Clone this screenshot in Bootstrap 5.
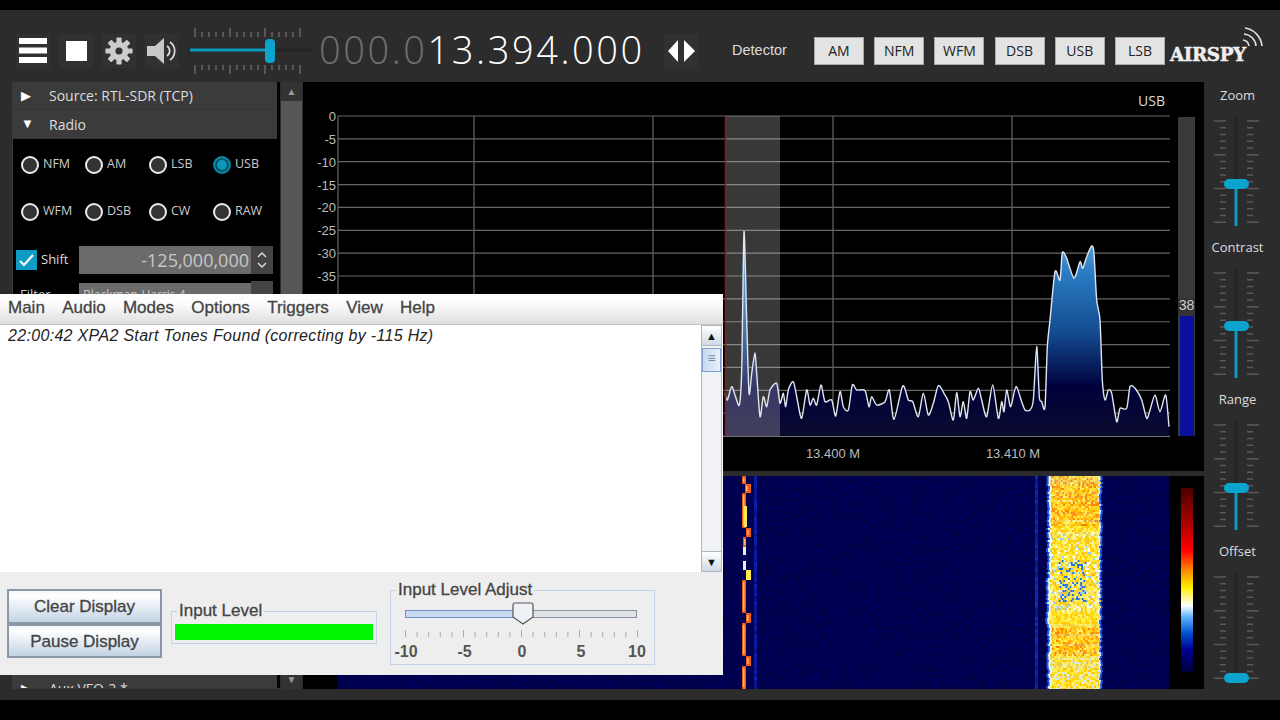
<!DOCTYPE html>
<html lang="en">
<head>
    <meta charset="UTF-8">
    <title>SDR# + PC-ALE</title>
    <link href="https://cdn.jsdelivr.net/npm/bootstrap@5.3.0/dist/css/bootstrap.min.css" rel="stylesheet">
    <style>
        html, body { height: 100%; background: #000; overflow: hidden; }
        body { font-family: "Open Sans", "Liberation Sans", sans-serif; color: #ddd; }
        .sdr-app { height: 690px; margin-top: 10px; background: #2c2c2c; }

        /* top bar */
        .sdr-top { height: 72px; padding: 9px 0 0 16px; }
        .sdr-tile { width: 34px; height: 34px; background: #313131; margin-right: 9px; }
        .sdr-hslider { margin: 3px 0 0 1px; width: 122px; }
        .sdr-freq { font-size: 38px; font-weight: 300; letter-spacing: 2.55px; color: #fff; line-height: 1; margin: -4px 0 0 8px; width: 345px; white-space: nowrap; }
        .sdr-freq span { color: #707070; }
        .sdr-arrows { width: 34px; height: 34px; background: #313131; }
        .sdr-detector { font-family: "Liberation Sans", sans-serif; font-size: 14.5px; color: #ddd; width: 82px; margin-left: 34px; }
        .sdr-mode { width: 50px; height: 28px; margin-right: 10.2px; padding: 0; border: 1px solid #a8a8a8; border-radius: 0; background: #e3e3e3; color: #222; font-size: 14px; line-height: 1; font-family: "Open Sans", sans-serif; }
        .sdr-logo { position: relative; width: 96px; height: 40px; margin-left: -6px; }
        .sdr-logo b { position: absolute; left: 1px; top: 15px; font-family: "DejaVu Serif", serif; font-weight: 700; font-size: 18px; letter-spacing: -.4px; line-height: 1; color: #eee; -webkit-text-stroke: .5px #eee; transform: scaleX(1.02); transform-origin: left; }
        .sdr-logo svg { position: absolute; left: 70px; top: -4px; }

        /* left panel */
        .sdr-main { height: 607px; }
        .sdr-left { width: 268px; margin-left: 12px; background: #000; font-size: 13px; overflow: hidden; border-left: 1px solid #3a3a3a; border-bottom: 1px solid #3a3a3a; }
        .sdr-head { flex: 0 0 28px; background: #3b3b3b; color: #ddd; font-size: 14px; border-bottom: 1px solid #333; padding-left: 8px; margin-right: 3px; }
        .sdr-head i { font-style: normal; width: 28px; font-size: 13px; color: #fff; }
        .sdr-head + .sdr-head { flex-basis: 29px; }
        .sdr-head.sdr-last { margin-bottom: -15px; }
        .sdr-radios { display: grid; grid-template-columns: repeat(4, 64px); grid-auto-rows: 47px; padding: 2px 0 0 8px; }
        .sdr-radio.form-check-input { width: 18px; height: 18px; margin: 0; background-color: #333; border: 2.5px solid #ececec; flex: none; }
        .sdr-radio.form-check-input:checked { background-image: none; background-color: #0c97bd; border-color: #0a86aa; box-shadow: inset 0 0 0 2px #055; }
        .sdr-radios label { color: #ccc; margin-left: 0; font-size: 12.5px; }
        .sdr-shift { height: 28px; margin-top: 11px; padding-left: 3px; }
        .sdr-check { width: 21px; height: 20px; background: #0f9cc4; flex: none; }
        .sdr-num { width: 172px; height: 28px; background: #6b6b6b; color: #c8c8c8; font-size: 18px; text-align: right; padding-right: 2px; line-height: 28px; }
        .sdr-spin { width: 22px; height: 28px; background: #444; }
        .sdr-filter { height: 24px; margin-top: 9px; padding-left: 7px; color: #ccc; }
        .sdr-filter .sdr-num { font-size: 12px; text-align: left; padding-left: 4px; line-height: 24px; height: 24px; }
        .sdr-scroll { width: 21px; margin-left: 1px; margin-right: 1px; background: #565656; }
        .sdr-scroll div { height: 19px; background: #333; color: #999; font-size: 10px; text-align: center; line-height: 19px; }

        /* centre */
        .sdr-centre { width: 901px; }
        .sdr-centre svg { display: block; }
        .sdr-spec { height: 389px; background: #000; }
        .sdr-spec text { font-family: "Liberation Sans", sans-serif; font-size: 13px; fill: #bbb; }
        .sdr-wf { height: 213px; margin-top: 5px; background: #000; overflow: hidden; }
        .sdr-wf canvas { display: block; filter: blur(.6px); }

        /* right sliders */
        .sdr-right { width: 76px; padding-top: 3px; }
        .sdr-right .sdr-label { height: 20px; line-height: 20px; text-align: center; font-size: 13px; color: #ddd; margin-left: -9px; }
        .sdr-right .sdr-group { height: 152px; }
        .sdr-right svg { display: block; margin-top: 11px; }

        /* java window on top */
        .jv-win { position: absolute; left: 0; top: 294px; width: 723px; height: 381px; background: #eee; color: #444; font-family: "Liberation Sans", sans-serif; }
        .jv-menu { height: 31px; padding: 0 0 2px 8px; background: linear-gradient(#fff, #fbfbfb 35%, #dedede); border-bottom: 1px solid #c4c4c4; gap: 17.3px; font-size: 17px; -webkit-text-stroke: .3px #444; }
        .jv-log { height: 247px; background: #fff; }
        .jv-text { padding: 0 8px; font-style: italic; font-size: 16px; color: #222; letter-spacing: .32px; margin-top: -1px; }
        .jv-sb { width: 21px; margin-right: 1px; background: #f0f2f5; border: 1px solid #aeb6bf; }
        .jv-sb div { height: 20px; background: linear-gradient(#fff, #cfd9e6); text-align: center; font-size: 11px; line-height: 20px; color: #111; border-bottom: 1px solid #aeb6bf; }
        .jv-sb .jv-thumb { height: 24px; margin-top: 2px; background: linear-gradient(90deg, #c6d9f0, #e8f0fa); border: 1px solid #7f9fca; color: #6d8fb8; line-height: 19px; font-size: 14px; }
        .jv-sb div:last-child { margin-top: auto; border-bottom: 0; border-top: 1px solid #aeb6bf; }
        .jv-bottom { padding: 17px 0 0 7px; }
        .jv-btns { width: 155px; }
        .jv-btn { display: block; height: 35px; width: 155px; padding: 0; border: 2px solid #8a98a8; border-radius: 0; background: linear-gradient(#f3f7fb, #fff 15%, #c3d3e4); color: #444; font-size: 17px; line-height: 1; -webkit-text-stroke: .3px #444; }
        .jv-btn + .jv-btn { height: 34px; }
        .jv-field { position: relative; border: 1px solid #c5d4e5; }
        .jv-field > span { position: absolute; left: 5px; top: -11px; background: #eee; padding: 0 2px; font-size: 17px; line-height: 20px; color: #444; -webkit-text-stroke: .3px #444; }
        .jv-level { width: 206px; height: 33px; margin: 22px 0 0 9px; }
        .jv-bar { position: absolute; left: 3px; right: 3px; top: 12px; height: 16px; background: #00f500; }
        .jv-adjust { width: 265px; height: 75px; margin: 1px 0 0 13px; }
        .jv-adjust svg { display: block; }
        .jv-adjust text { font-family: "Liberation Sans", sans-serif; font-size: 16px; fill: #555; font-weight: 700; text-anchor: middle; }
    </style>
</head>
<body>
<div class="sdr-app">
    <!-- top bar -->
    <div class="sdr-top d-flex align-items-center">
        <div class="sdr-tile d-flex align-items-center justify-content-center">
            <svg width="28" height="25" viewBox="0 0 28 25" fill="#fff"><rect y="0" width="28" height="6"/><rect y="9.500" width="28" height="6"/><rect y="19" width="28" height="6"/></svg>
        </div>
        <div class="sdr-tile d-flex align-items-center justify-content-center">
            <svg width="21" height="20"><rect width="21" height="20" fill="#fff"/></svg>
        </div>
        <div class="sdr-tile d-flex align-items-center justify-content-center">
            <svg width="28" height="28" viewBox="-15 -15 30 30" fill="#ccc">
                <circle r="10"/>
                <g id="gearTeeth"></g>
                <circle r="3.800" fill="#313131"/>
            </svg>
        </div>
        <div class="sdr-tile d-flex align-items-center justify-content-center">
            <svg width="32" height="28" viewBox="0 0 32 28">
                <polygon points="1,9 9,9 18,1 18,27 9,19 1,19" fill="#c8c8c8"/>
                <path d="M21 9a6 6 0 0 1 0 10M24 5a11 11 0 0 1 0 18" fill="none" stroke="#ddd" stroke-width="1.700"/>
            </svg>
        </div>
        <svg class="sdr-hslider" id="volume" width="122" height="48" viewBox="0 0 122 48"></svg>
        <div class="sdr-freq"><span>000.0</span>13.394.000</div>
        <div class="sdr-arrows d-flex align-items-center justify-content-center">
            <svg width="30" height="22" viewBox="0 0 30 22" fill="#fff"><polygon points="12,0 12,22 2,11"/><polygon points="18,0 18,22 29,11"/></svg>
        </div>
        <div class="sdr-detector">Detector</div>
        <button class="btn sdr-mode">AM</button>
        <button class="btn sdr-mode">NFM</button>
        <button class="btn sdr-mode">WFM</button>
        <button class="btn sdr-mode">DSB</button>
        <button class="btn sdr-mode">USB</button>
        <button class="btn sdr-mode">LSB</button>
        <div class="sdr-logo">
            <b>AIRSPY</b>
            <svg width="26" height="22" viewBox="0 0 24 22" fill="none" stroke="#ddd" stroke-width="1.700"><path d="M3 13a7 7 0 0 1 6 6M4 7a13 13 0 0 1 12 12M5 1a20 20 0 0 1 17 18"/></svg>
        </div>
    </div>

    <div class="sdr-main d-flex">
        <!-- left panel -->
        <div class="sdr-left d-flex flex-column">
            <div class="sdr-head d-flex align-items-center"><i>&#9654;</i>Source: RTL-SDR (TCP)</div>
            <div class="sdr-head d-flex align-items-center"><i>&#9660;</i>Radio</div>
            <div class="sdr-radios" id="radios"></div>
            <div class="sdr-shift d-flex align-items-center">
                <div class="sdr-check d-flex align-items-center justify-content-center">
                    <svg width="15" height="13" viewBox="0 0 15 13" fill="none" stroke="#fff" stroke-width="2.200"><path d="M1 7l4 4 9-10"/></svg>
                </div>
                <div class="ms-1" style="width:38px">Shift</div>
                <div class="sdr-num">-125,000,000</div>
                <div class="sdr-spin d-flex align-items-center justify-content-center">
                    <svg width="12" height="20" viewBox="0 0 12 20" fill="none" stroke="#ddd" stroke-width="1.400"><path d="M2 7l4-4 4 4M2 13l4 4 4-4"/></svg>
                </div>
            </div>
            <div class="sdr-filter d-flex align-items-center">
                <div style="width:59px">Filter</div>
                <div class="sdr-num">Blackman-Harris 4</div>
                <div class="sdr-spin d-flex align-items-center justify-content-center"></div>
            </div>
            <div class="flex-grow-1"></div>
            <div class="sdr-head sdr-last d-flex align-items-center"><i>&#9654;</i>Aux VFO-2 *</div>
        </div>
        <div class="sdr-scroll d-flex flex-column">
            <div>&#9650;</div>
            <div class="mt-auto">&#9660;</div>
        </div>

        <!-- spectrum and waterfall -->
        <div class="sdr-centre">
            <div class="sdr-spec">
                <svg id="spec" width="901" height="389" viewBox="303 82 901 389"></svg>
            </div>
            <div class="sdr-wf">
                <canvas id="wf" width="901" height="213"></canvas>
            </div>
        </div>

        <!-- right sliders -->
        <div class="sdr-right" id="sliders"></div>
    </div>
</div>

<!-- java window lying over the SDR program -->
<div class="jv-win">
    <nav class="jv-menu d-flex align-items-center">
        <span>Main</span><span>Audio</span><span>Modes</span><span>Options</span><span>Triggers</span><span>View</span><span>Help</span>
    </nav>
    <div class="jv-log d-flex">
        <div class="jv-text flex-grow-1">22:00:42 XPA2 Start Tones Found (correcting by -115 Hz)</div>
        <div class="jv-sb d-flex flex-column">
            <div>&#9650;</div>
            <div class="jv-thumb">&#8801;</div>
            <div>&#9660;</div>
        </div>
    </div>
    <div class="jv-bottom d-flex align-items-start">
        <div class="jv-btns">
            <button class="btn jv-btn">Clear Display</button>
            <button class="btn jv-btn">Pause Display</button>
        </div>
        <div class="jv-field jv-level"><span>Input Level</span><div class="jv-bar"></div></div>
        <div class="jv-field jv-adjust">
            <span>Input Level Adjust</span>
            <svg id="adjust" width="263" height="73" viewBox="391 591 263 73"></svg>
        </div>
    </div>
</div>

<script>
    document.addEventListener("DOMContentLoaded", function () {
        // gear teeth
        let teeth = "";
        for (let a = 0; a < 8; a++) {
            teeth += `<rect x="-2.800" y="-14.500" width="5.600" height="7" rx="1" transform="rotate(${a * 45})"/>`;
        }
        document.getElementById("gearTeeth").innerHTML = teeth;

        // volume slider
        let vol = "";
        for (let i = 0; i < 16; i++) {
            const x = 6 + i * 7;
            const long = i % 5 === 0;
            vol += `<path d="M${x} ${long ? 0 : 4}V9M${x} 37V${long ? 46 : 42}" stroke="#666" stroke-width="1.500"/>`;
        }
        vol += `<path d="M0 22H122" stroke="#232323" stroke-width="3"/><path d="M1 22H80" stroke="#0c9cc2" stroke-width="3"/>`;
        vol += `<rect x="76" y="11" width="10" height="24" rx="4" fill="#0ca4cc"/>`;
        document.getElementById("volume").innerHTML = vol;

        // radio buttons
        const modes = ["NFM", "AM", "LSB", "USB", "WFM", "DSB", "CW", "RAW"];
        document.getElementById("radios").innerHTML = modes.map(m => `
            <div class="d-flex align-items-center gap-1">
                <input class="form-check-input sdr-radio" type="radio" name="mode" id="r${m}" ${m === "USB" ? "checked" : ""}>
                <label for="r${m}">${m}</label>
            </div>`).join("");

        // vertical sliders
        const sliders = [["Zoom", 68], ["Contrast", 58], ["Range", 68], ["Offset", 106]];
        document.getElementById("sliders").innerHTML = sliders.map(([name, pos]) => {
            let s = `<path d="M32 0V110" stroke="#262626" stroke-width="3"/>`;
            for (let i = 0; i < 16; i++) {
                const y = 5 + i * 6.75;
                const long = i % 5 === 0;
                s += `<path d="M${long ? 10 : 16} ${y}H22M43 ${y}H${long ? 55 : 49}" stroke="#5a5a5a" stroke-width="1.500"/>`;
            }
            s += `<path d="M32 ${pos}V110" stroke="#0c9cc2" stroke-width="3"/>`;
            s += `<rect x="20" y="${pos - 5}" width="25" height="10" rx="5" fill="#0ca4cc"/>`;
            return `<div class="sdr-group"><div class="sdr-label">${name}</div><svg width="76" height="114" viewBox="0 0 76 114">${s}</svg></div>`;
        }).join("");

        // spectrum
        const trace = [[15,520],[22,540],[35,500],[45,525],[58,555],[65,450],[72,35],[80,300],[87,520],[95,460],[105,398],[110,460],[120,590],[130,530],[140,560],[150,510],[170,490],[180,550],[190,520],[197,560],[205,510],[220,485],[232,540],[245,595],[260,510],[270,555],[280,535],[290,555],[303,495],[315,545],[335,540],[347,588],[360,515],[370,560],[385,570],[397,495],[410,510],[435,512],[447,560],[455,530],[470,555],[495,545],[508,510],[522,598],[548,498],[565,540],[578,545],[595,590],[610,520],[625,585],[640,550],[655,497],[672,520],[685,545],[700,600],[710,518],[720,590],[730,545],[740,595],[750,515],[760,540],[775,505],[785,540],[800,590],[818,495],[835,595],[845,545],[852,575],[860,510],[872,560],[888,500],[905,545],[915,570],[930,570],[940,540],[950,380],[958,530],[965,545],[975,562],[982,380],[990,300],[1005,155],[1020,180],[1027,98],[1040,115],[1062,175],[1080,125],[1088,145],[1100,110],[1115,78],[1122,100],[1130,240],[1140,300],[1147,480],[1155,540],[1165,510],[1175,520],[1190,605],[1200,565],[1220,565],[1230,500],[1245,505],[1265,540],[1280,595],[1290,570],[1305,525],[1320,575],[1337,525],[1347,620]]
            .map(([x, y]) => [720 + x / 3, 220 + y / 3]);
        // smooth the trace so the peaks come out round
        let line = `${trace[0][0]} ${trace[0][1]}`;
        for (let i = 0; i < trace.length - 1; i++) {
            const p0 = trace[Math.max(i - 1, 0)], p1 = trace[i], p2 = trace[i + 1], p3 = trace[Math.min(i + 2, trace.length - 1)];
            const c1x = p1[0] + (p2[0] - p0[0]) / 8, c1y = p1[1] + (p2[1] - p0[1]) / 8;
            const c2x = p2[0] - (p3[0] - p1[0]) / 8, c2y = p2[1] - (p3[1] - p1[1]) / 8;
            line += `C${c1x.toFixed(1)} ${c1y.toFixed(1)} ${c2x.toFixed(1)} ${c2y.toFixed(1)} ${p2[0].toFixed(1)} ${p2[1].toFixed(1)}`;
        }
        let spec = `<defs><linearGradient id="sig" gradientUnits="userSpaceOnUse" x1="0" x2="0" y1="232" y2="436">
            <stop offset="0" stop-color="#6aa8dc"/><stop offset=".2" stop-color="#2a7cc4"/><stop offset=".5" stop-color="#134a8e"/>
            <stop offset=".76" stop-color="#00003c"/><stop offset="1" stop-color="#0b0b2e"/></linearGradient></defs>`;
        for (let i = 0; i <= 14; i++) {
            const y = 116 + i * 22.86;
            spec += `<path d="M338 ${y}H1170" stroke="${i === 14 ? "#999" : "#666"}" stroke-width="1.200"/>`;
            if (i < 8) spec += `<text x="336" y="${y + 5}" text-anchor="end">${i === 0 ? "0" : "-" + i * 5}</text>`;
        }
        [338, 474, 653, 833, 1012].forEach(x => {
            spec += `<path d="M${x} 116V436" stroke="#666" stroke-width="1.200"/>`;
        });
        spec += `<path d="M${line}V436H724Z" fill="url(#sig)"/>`;
        spec += `<rect x="726" y="116" width="54" height="320" fill="#fff" fill-opacity=".22"/>`;
        spec += `<path d="M${line}" fill="none" stroke="#dfe6f0" stroke-width="1.400" stroke-linejoin="round"/>`;
        spec += `<path d="M725.500 116V436" stroke="#a51010" stroke-width="1.500"/>`;
        spec += `<text x="833" y="458" text-anchor="middle">13.400 M</text><text x="1013" y="458" text-anchor="middle">13.410 M</text>`;
        spec += `<text x="1165" y="106" text-anchor="end" style="font-family:'Open Sans';fill:#ddd;font-size:14px">USB</text>`;
        spec += `<rect x="1178" y="117" width="17" height="319" fill="#3a3a3a"/><rect x="1180" y="316" width="14" height="120" fill="#0a109c"/>`;
        spec += `<rect x="1178" y="298" width="17" height="18" fill="#333"/><text x="1186.500" y="310" text-anchor="middle" style="fill:#ccc;font-size:14px">38</text>`;
        document.getElementById("spec").innerHTML = spec;

        // waterfall: canvas origin is at page x 303, y 476
        const ctx = document.getElementById("wf").getContext("2d");
        let seed = 7;
        const rnd = () => { seed = (seed * 16807) % 2147483647; return seed / 2147483647; };
        const X = x => x - 303, Y = y => y - 476;
        ctx.fillStyle = "#000";
        ctx.fillRect(0, 0, 901, 213);
        for (let y = 0; y < 213; y += 2) {
            for (let x = X(337); x < X(1170) - 1; x += 2) {
                const b = 66 + rnd() * 30;
                ctx.fillStyle = `rgb(0,0,${b | 0})`;
                ctx.fillRect(x, y, 2, 2);
            }
        }
        // faint carriers
        for (let y = 0; y < 213; y += 3) {
            ctx.fillStyle = `rgba(10,40,190,${0.4 + rnd() * 0.5})`;
            ctx.fillRect(X(754), y, 3, 3);
            ctx.fillStyle = `rgba(10,50,200,${0.45 + rnd() * 0.5})`;
            ctx.fillRect(X(1035), y, 3, 3);
        }
        // the tone blips near the left edge
        const blips = [[0,8,742,746],[8,17,745,751],[17,52,742,746],[52,61,746,751],[61,71,743,746],[94,104,746,751],[104,137,742,746],[137,147,746,751],[147,180,742,746],[180,190,746,751],[190,213,742,746]];
        blips.forEach(b => {
            ctx.fillStyle = "#f0591a";
            ctx.fillRect(X(b[2]), b[0], b[3] - b[2], b[1] - b[0]);
            ctx.fillStyle = "#ffc060";
            ctx.fillRect(X(b[2]) + 1, b[0] + 2, 1.500, b[1] - b[0] - 4);
        });
        ctx.fillStyle = "#ffe84a";
        ctx.fillRect(X(744), 30, 3, 21);
        ctx.fillRect(X(746), 94, 5, 10);
        ctx.fillStyle = "#dff2ff";
        ctx.fillRect(X(743), 71, 3, 8);
        ctx.fillRect(X(743), 85, 3, 9);
        // the signal band
        const yellow = ["#ffe21a", "#ffd000", "#ffee40", "#ffc000", "#fff070"];
        const orange = ["#ff9a10", "#f88000", "#ffb000", "#ffc820", "#ffd840"];
        const pale = ["#ffffa0", "#d8f0ff", "#ffee50", "#90c8ff", "#ffe020", "#fff"];
        for (let y = 0; y < 213; y += 2) {
            const jl = rnd() * 2, jr = rnd() * 2;
            const left = 1048 + jl - (y > 100 && y < 150 ? 1 : 0), right = 1101 - jr;
            ctx.fillStyle = "#1a5ae0";
            ctx.fillRect(X(left) - 2, y, right - left + 4, 2);
            ctx.fillStyle = "#e8f4ff";
            ctx.fillRect(X(left), y, right - left, 2);
            for (let x = left + 2; x < right - 2; x += 2) {
                let set = yellow;
                if (y < 50 || (y > 150 && y < 180) || (y > 85 && y < 100 && rnd() < .2)) set = rnd() < .65 ? orange : yellow;
                if (y > 55 && y < 135 && rnd() < .28) set = pale;
                let c = set[Math.floor(rnd() * set.length)];
                if (y > 80 && y < 125 && x > 1058 && x < 1085 && rnd() < .22) c = "#1e70d8";
                if (y > 180 && rnd() < .12) c = "#cfe6ff";
                ctx.fillStyle = c;
                ctx.fillRect(X(x), y, 2, 2);
            }
        }
        // colour bar
        const g = ctx.createLinearGradient(0, Y(488), 0, Y(672));
        [[0, "#4c0000"], [.2, "#b00000"], [.34, "#ff0000"], [.45, "#ff8c00"], [.54, "#ffee00"], [.64, "#ffffff"], [.7, "#60b4ff"], [.79, "#0050d0"], [.88, "#000090"], [1, "#00003c"]]
            .forEach(s => g.addColorStop(s[0], s[1]));
        ctx.fillStyle = g;
        ctx.fillRect(X(1181), Y(488), 12, 184);

        // input level slider
        let adj = `<rect x="405.500" y="610.500" width="231" height="7" fill="#dfe3e8" stroke="#8a949f"/>`;
        adj += `<rect x="405.500" y="610.500" width="112" height="7" fill="#c9d9ef" stroke="#6f90c4"/>`;
        for (let i = 0; i <= 20; i++) {
            const x = 405.5 + i * 11.6;
            adj += `<path d="M${x} ${i % 5 === 0 ? 630 : 632}V637" stroke="#aaa"/>`;
        }
        adj += `<path d="M513 605a2 2 0 0 1 2-2h16a2 2 0 0 1 2 2v12l-10 7-10-7z" fill="#eef2f7" stroke="#555" stroke-width="1.200"/>`;
        [[406, "-10"], [464.500, "-5"], [522, "0"], [581, "5"], [637, "10"]].forEach(t => {
            adj += `<text x="${t[0]}" y="657">${t[1]}</text>`;
        });
        document.getElementById("adjust").innerHTML = adj;
    });
</script>

<script src="https://cdn.jsdelivr.net/npm/bootstrap@5.3.0/dist/js/bootstrap.bundle.min.js"></script>
</body>
</html>
